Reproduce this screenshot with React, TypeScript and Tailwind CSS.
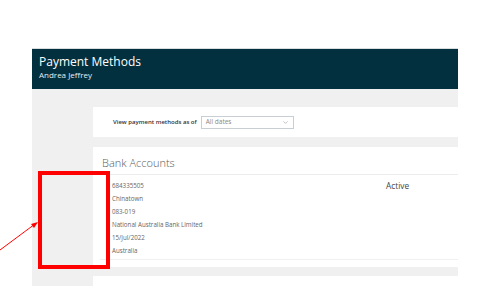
import { ChevronDown } from 'lucide-react';

const bankRows = [
  '684335505',
  'Chinatown',
  '083-019',
  'National Australia Bank Limited',
  '15/Jul/2022',
  'Australia',
];

function Annotation() {
  return (
    <>
      <div className="absolute left-[38px] top-[171px] w-[72px] h-[98px] border-4 border-[#ff0000]" />
      <svg className="absolute left-0 top-0" width="501" height="286">
        <line x1="0" y1="250" x2="35" y2="224" stroke="#ff0000" strokeWidth="1" />
        <polygon points="38,222 31,224 34,228" fill="#ff0000" />
      </svg>
    </>
  );
}

export default function App() {
  return (
    <div className="relative w-[501px] h-[286px] bg-white overflow-hidden font-['Open_Sans',sans-serif]">
      <div className="ml-[32px] pt-[48px] w-[426px]">
        <div className="border-t border-[#d9dcde] bg-[#02303f] h-[41px] pl-[7px] pt-[4px] text-white">
          <div className="text-[12px] leading-[17px]">Payment Methods</div>
          <div className="text-[8px] leading-[10px] text-[#e8eef0]">Andrea Jeffrey</div>
        </div>

        <div className="flex bg-[#f0f0f0] h-[197px]">
          <div className="w-[61px]" />
          <div className="flex-1 flex flex-col pt-[18px]">
            <div className="bg-white h-[30px] flex items-center pl-[20px] gap-[4px]">
              <span className="text-[6px] font-semibold text-[#333]">View payment methods as of</span>
              <div className="w-[93px] h-[13px] border border-[#c8ced3] flex items-center justify-between px-[4px]">
                <span className="text-[6.5px] text-[#888]">All dates</span>
                <ChevronDown size={7} className="text-[#999]" />
              </div>
            </div>

            <div className="mt-[10px] bg-white h-[120px] pt-[6px]">
              <div className="pl-[9px] text-[11px] leading-[20px] font-light text-[#5a5a5a]">Bank Accounts</div>
              <div className="ml-[7px] border-b border-[#ececec] mt-[1px]" />
              <div className="flex pl-[19px] pt-[4px]">
                <div className="w-[274px]">
                  {bankRows.map((row) => (
                    <div key={row} className="text-[6.2px] leading-[13px] text-[#666]">
                      {row}
                    </div>
                  ))}
                </div>
                <div className="text-[8.3px] leading-[12px] text-[#444] mt-[1px]">Active</div>
              </div>
              <div className="ml-[7px] border-b border-[#f0f0f0] mt-[2px]" />
            </div>

            <div className="mt-[9px] bg-white flex-1" />
          </div>
        </div>
      </div>
      <Annotation />
    </div>
  );
}
